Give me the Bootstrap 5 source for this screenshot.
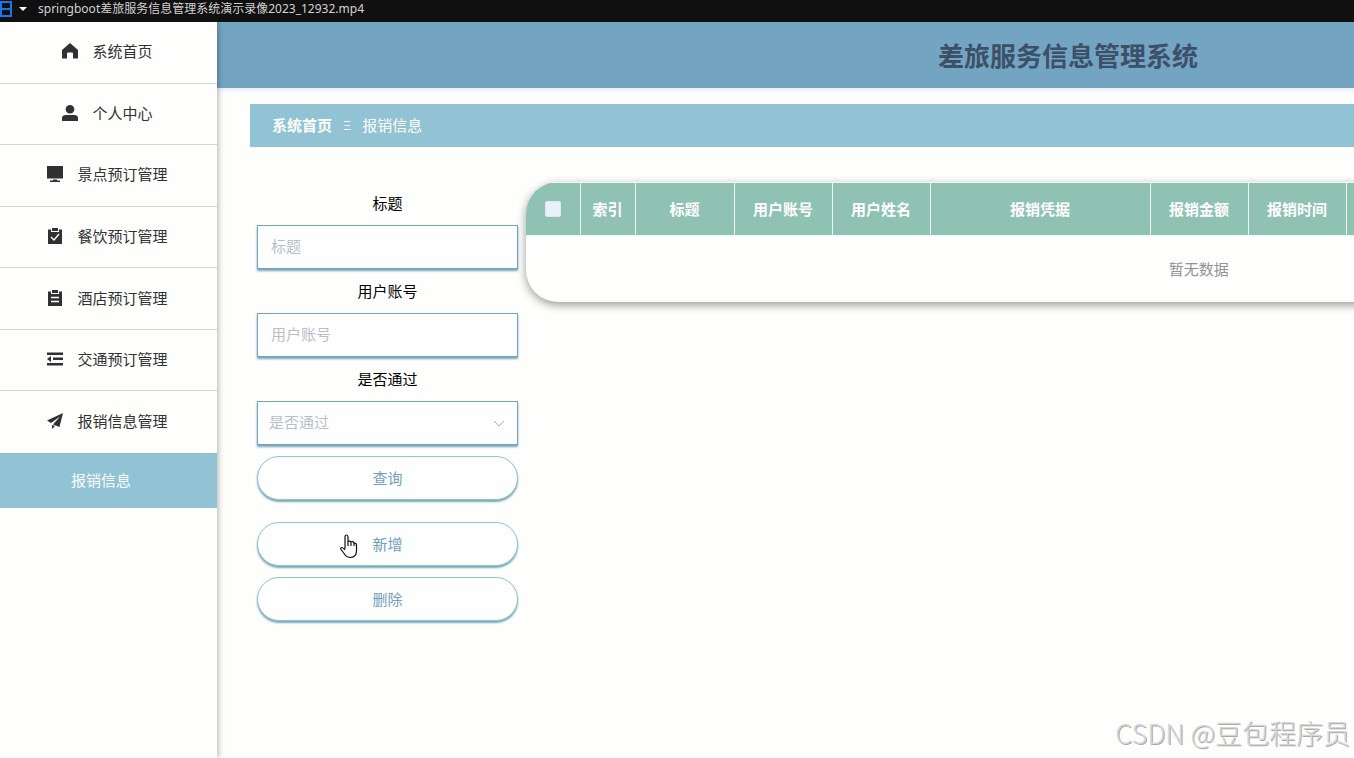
<!DOCTYPE html>
<html lang="zh-CN">
<head>
<meta charset="utf-8">
<meta name="viewport" content="width=device-width, initial-scale=1">
<title>差旅服务信息管理系统</title>
<link href="https://cdn.jsdelivr.net/npm/bootstrap@5.3.0/dist/css/bootstrap.min.css" rel="stylesheet">
<style>
  body { font-family: "Noto Sans", "Noto Sans CJK SC", sans-serif; font-size: 15px; line-height: 24px; background: #fefefd; color: #303133; }
  .player-bar { height: 22px; background: #101010; color: #d2d2d2; font-size: 12px; line-height: 18px; }
  .player-name { margin-left: 10px; }
  .side-panel { flex: 0 0 217px; background: #fefefd; box-shadow: 1px 0 6px rgba(0,0,0,.32); z-index: 2; }
  .side-menu { display: grid; grid-template-rows: repeat(7, 1fr); height: 431px; }
  .side-menu a { color: #303133; gap: 14px; padding: 0 2px 2px 0; border-bottom: 1px solid #d6d6d6; }
  .side-menu li:last-child a { border-bottom: 0; }
  .side-menu svg { width: 16px; height: 16px; fill: #303133; }
  .side-sub { height: 55px; background: #91c3d5; color: #fff; padding: 0 0 2px 71px; }
  /* the workspace keeps the full desktop width and is clipped by the window */
  .workspace { flex: 0 0 1702px; min-width: 0; }
  .top-banner { height: 66px; padding-top: 2px; background: #73a5c2; box-shadow: 0 1px 6px rgba(100,110,230,.2); }
  .top-banner h1 { font-size: 26px; line-height: 36px; color: #3c5069; }
  .inner { padding: 16px 0 0 33px; }
  .crumb-bar { height: 43px; background: #91c3d5; color: #fff; padding: 0 22px 2px; gap: 11px; }
  .crumb-bar a { color: #fff; }
  .crumb-mark { font-size: 13px; }
  .panels { margin-top: 35px; padding: 0 47px 0 7px; gap: 8px; }
  .query-form { flex: 0 0 261px; }
  .query-form label { line-height: 44px; color: #000; }
  .query-form label:first-child { line-height: 43px; }
  .field { height: 44px; font-size: 15px; border: 1px solid #73a5c2; border-radius: 0; background-color: #fefefe; padding: 0 13px 2px; box-shadow: 0 2px 2px #73a5b8; }
  .field::placeholder { color: #b8bec8; }
  select.field { color: #b8bec8; padding: 0 36px 2px 11px; background-position: right 11px center; background-size: 14px 14px;
    background-image: url("data:image/svg+xml,%3Csvg xmlns='http://www.w3.org/2000/svg' viewBox='0 0 14 14'%3E%3Cpath d='M2 5l5 5 5-5' fill='none' stroke='%23a8aeb8'/%3E%3C/svg%3E"); }
  .pill { height: 44px; font-size: 15px; color: #6f9fbd; background: #fefefe; border: 1px solid #91c3d5; border-radius: 22px; box-shadow: 0 2px 2px #79a9b8; }
  .form-actions { margin-top: 11px; }
  .edit-actions { margin-top: 22px; gap: 11px; }
  .pointer { left: 82px; top: 11px; width: 20px; height: 26px; }
  .result-box { min-width: 0; border-radius: 32px; background: #fefefd; box-shadow: 0 3px 10px rgba(0,0,0,.4); }
  .result-table { table-layout: fixed; width: 100%; }
  .result-table th { height: 53px; padding: 0; background: #8fc2b3; color: #fff; border: 1px solid #f0f8f5; border-width: 1px 1px 1px 0; vertical-align: middle; }
  .result-table td { height: 66px; padding: 0; color: #909399; border: 0; vertical-align: middle; }
  .w-check { width: 54px; } .w-mini { width: 55px; } .w-std { width: 98px; } .w-title { width: 99px; } .w-proof { width: 220px; }
  .result-table .form-check-input { display: block; float: none; width: 16px; height: 16px; margin: 0 auto; border: 1px solid #dfe6f2; border-radius: 2px; background: #eaf0fa; }
  .stamp { right: 4px; bottom: 5px; font-family: "Noto Sans CJK SC", sans-serif; font-size: 27px; line-height: 40px; font-weight: 300; color: #d6d6d6; text-shadow: 1px 1px 0 #aaa; z-index: 3; }
</style>
</head>
<body class="vh-100 overflow-hidden d-flex flex-column position-relative">
<div class="player-bar d-flex align-items-start flex-shrink-0">
  <svg width="28" height="18" viewBox="0 0 28 18" aria-hidden="true"><path d="M-3 2H11V16H-3M2 9H11M1 2V16" fill="none" stroke="#1677ee" stroke-width="2"/><path d="M19 7h8l-4 4z" fill="#fff"/></svg>
  <span class="player-name">springboot差旅服务信息管理系统演示录像2023_12932.mp4</span>
</div>

<div class="d-flex flex-grow-1 overflow-hidden">
  <nav class="side-panel position-relative">
    <ul class="side-menu list-unstyled m-0">
      <li><a href="#" class="d-flex h-100 align-items-center justify-content-center text-decoration-none"><svg viewBox="0 0 16 16"><path d="M8 0L16 7V15.500H11V10.500Q11 9.500 10 9.500H6Q5 9.500 5 10.500V15.500H0V7z"/></svg>系统首页</a></li>
      <li><a href="#" class="d-flex h-100 align-items-center justify-content-center text-decoration-none"><svg viewBox="0 0 16 16"><circle cx="8" cy="4.300" r="4.300"/><path d="M0 16v-3q0-3 4-3h8q4 0 4 3v3z"/></svg>个人中心</a></li>
      <li><a href="#" class="d-flex h-100 align-items-center justify-content-center text-decoration-none"><svg viewBox="0 0 16 16"><path d="M0 0H16V12.500H0zM6 13.500h4v1h3V16H3v-1.500h3z"/></svg>景点预订管理</a></li>
      <li><a href="#" class="d-flex h-100 align-items-center justify-content-center text-decoration-none"><svg viewBox="0 0 16 16"><path d="M1 1.500H4V4H12V1.500H15V16H1zM5 0h6v3H5z"/><path d="M4 9l3 3 5-6" fill="none" stroke="#fff" stroke-width="1.300"/></svg>餐饮预订管理</a></li>
      <li><a href="#" class="d-flex h-100 align-items-center justify-content-center text-decoration-none"><svg viewBox="0 0 16 16"><path d="M1 1.500H4V4H12V1.500H15V16H1zM5 0h6v3H5z"/><path d="M4 7.500h8M4 11.500h8" stroke="#fff" stroke-width="1.300"/></svg>酒店预订管理</a></li>
      <li><a href="#" class="d-flex h-100 align-items-center justify-content-center text-decoration-none"><svg viewBox="0 0 16 16"><path d="M0 1.500H16V4H0zM6 6.500H16V9H6zM0 12H16V14.500H0zM0 8L4 5v6z"/></svg>交通预订管理</a></li>
      <li><a href="#" class="d-flex h-100 align-items-center justify-content-center text-decoration-none"><svg viewBox="0 0 16 16"><path d="M16 0L0 7.500 4 10 13 3.500 6 11.500 12.500 14zM5 12v4l3-3z"/></svg>报销信息管理</a></li>
    </ul>
    <a href="#" class="side-sub d-flex align-items-center text-decoration-none">报销信息</a>
  </nav>

  <main class="workspace">
    <header class="top-banner d-flex align-items-center justify-content-center">
      <h1 class="m-0 fw-bold">差旅服务信息管理系统</h1>
    </header>
    <div class="inner">
      <div class="crumb-bar d-flex align-items-center">
        <a href="#" class="fw-bold text-decoration-none">系统首页</a><span class="crumb-mark">Ξ</span><span>报销信息</span>
      </div>
      <div class="panels d-flex align-items-start">
        <form class="query-form text-center">
          <label class="d-block" for="q-title">标题</label>
          <input class="form-control field" id="q-title" type="text" placeholder="标题">
          <label class="d-block" for="q-account">用户账号</label>
          <input class="form-control field" id="q-account" type="text" placeholder="用户账号">
          <label class="d-block" for="q-pass">是否通过</label>
          <select class="form-select field" id="q-pass"><option>是否通过</option></select>
          <div class="form-actions">
            <button class="btn pill w-100 d-block" type="button">查询</button>
          </div>
          <div class="edit-actions d-flex flex-column position-relative">
            <button class="btn pill w-100" type="button">新增</button>
            <button class="btn pill w-100" type="button">删除</button>
            <svg class="pointer position-absolute" viewBox="0 0 20 26" aria-hidden="true"><path d="M6 16V4Q6 2 7.500 2T9 4v6V8.500q2-1 3 .5v1.500V9q2-1 3 .5V12v-1.500q2.500-.5 2.500 1.500v6q0 6-6 6.500-4 0-6-3.500L2 16.500q-1-2 1-2 1 0 3 2.500M9 9v4M12 9.500V13M15 10.500V13" fill="#fff" stroke="#111" stroke-width="1.200"/></svg>
          </div>
        </form>
        <div class="result-box flex-fill overflow-hidden">
          <table class="result-table table m-0 text-center">
            <colgroup><col class="w-check"><col class="w-mini"><col class="w-title"><col class="w-std"><col class="w-std"><col class="w-proof"><col class="w-std"><col class="w-std"><col></colgroup>
            <thead><tr>
              <th><input class="form-check-input" type="checkbox" aria-label="全选"></th>
              <th>索引</th><th>标题</th><th>用户账号</th><th>用户姓名</th><th>报销凭据</th><th>报销金额</th><th>报销时间</th><th></th>
            </tr></thead>
            <tbody><tr><td colspan="9">暂无数据</td></tr></tbody>
          </table>
        </div>
      </div>
    </div>
  </main>
</div>
<div class="stamp position-absolute">CSDN @豆包程序员</div>
<script src="https://cdn.jsdelivr.net/npm/bootstrap@5.3.0/dist/js/bootstrap.bundle.min.js"></script>
</body>
</html>
